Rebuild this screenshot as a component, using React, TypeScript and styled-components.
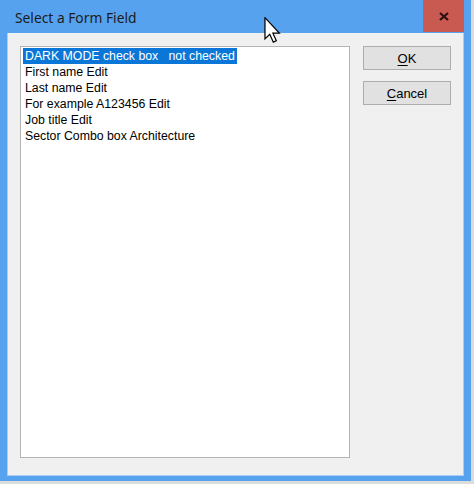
import styled, { createGlobalStyle } from 'styled-components';

const GlobalStyle = createGlobalStyle`
  html, body {
    margin: 0;
    padding: 0;
    background: #dcdcdc;
  }
`;

const items = [
  'DARK MODE check box   not checked',
  'First name Edit',
  'Last name Edit',
  'For example A123456 Edit',
  'Job title Edit',
  'Sector Combo box Architecture',
];

function App() {
  return (
    <>
      <GlobalStyle />
      <Page>
        <Window>
          <TitleBar>
            <Title>Select a Form Field</Title>
            <CloseButton>
              <svg width="10" height="9" viewBox="0 0 10 9">
                <path d="M1 1 L9 8 M9 1 L1 8" stroke="#2a1010" strokeWidth="2.2" />
              </svg>
            </CloseButton>
          </TitleBar>
          <Client>
            <ListBox>
              {items.map((item, i) => (
                <Row key={item}>
                  <Item $selected={i === 0}>{item}</Item>
                </Row>
              ))}
            </ListBox>
            <Buttons>
              <Button>
                <u>O</u>K
              </Button>
              <Button>
                <u>C</u>ancel
              </Button>
            </Buttons>
          </Client>
          <Cursor width="17" height="26" viewBox="0 0 12 19">
            <path
              d="M0.5 0.5 L0.5 16 L4 12.6 L6.6 18.4 L8.8 17.4 L6.3 11.8 L11 11.8 Z"
              fill="#fff"
              stroke="#000"
              strokeWidth="0.9"
            />
          </Cursor>
        </Window>
      </Page>
    </>
  );
}

const Page = styled.div`
  width: 474px;
  height: 484px;
`;

const Window = styled.div`
  position: relative;
  display: flex;
  flex-direction: column;
  width: 471px;
  height: 481px;
  box-sizing: border-box;
  padding: 0 7px 5px 7px;
  background: #56a2ee;
`;

const TitleBar = styled.div`
  display: flex;
  justify-content: space-between;
  height: 33px;
`;

const Title = styled.span`
  padding: 8px 0 0 8px;
  font-family: 'Noto Sans', 'Open Sans', sans-serif;
  font-size: 13.8px;
  color: #1c1c1c;
`;

const CloseButton = styled.div`
  display: flex;
  align-items: center;
  justify-content: center;
  width: 41px;
  height: 32px;
  padding-top: 1px;
  box-sizing: border-box;
  background: #c85a52;
`;

const Client = styled.div`
  flex: 1;
  display: flex;
  gap: 13px;
  box-sizing: border-box;
  padding: 13px 12px 17px 12px;
  background: #f0f0f0;
  border: 1px solid #a9cdf3;
  border-top: none;
`;

const ListBox = styled.div`
  width: 330px;
  box-sizing: border-box;
  padding: 0 2px;
  background: #fff;
  border: 1px solid #b4b4b4;
`;

const Row = styled.div`
  height: 16px;
  line-height: 16px;
`;

const Item = styled.span<{ $selected?: boolean }>`
  display: inline-block;
  padding: 0 2px;
  white-space: pre;
  font-family: 'Liberation Sans', Arial, sans-serif;
  font-size: 12.3px;
  color: ${(p) => (p.$selected ? '#fff' : '#000')};
  background: ${(p) => (p.$selected ? '#0a77d8' : 'transparent')};
`;

const Buttons = styled.div`
  display: flex;
  flex-direction: column;
  gap: 11px;
`;

const Button = styled.button`
  width: 88px;
  height: 24px;
  padding: 0;
  background: #e1e1e1;
  border: 1px solid #adadad;
  font-family: 'Liberation Sans', Arial, sans-serif;
  font-size: 13px;
  color: #000;

  u {
    text-underline-offset: 2px;
  }
`;

const Cursor = styled.svg`
  position: absolute;
  left: 264px;
  top: 17px;
`;

export default App;
